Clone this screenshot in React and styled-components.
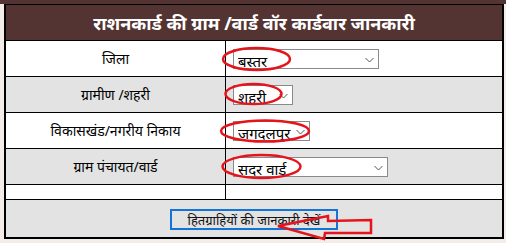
import React from 'react'
import styled, { createGlobalStyle } from 'styled-components'

const Global = createGlobalStyle`
  html, body {
    margin: 0;
    padding: 0;
  }
  body {
    background: #f4ece9;
    font-family: "Noto Sans", "Liberation Sans", sans-serif;
    width: 506px;
    height: 243px;
    overflow: hidden;
  }
`

const rows = [
  { label: 'जिला', value: 'बस्तर', width: 146, shade: false },
  { label: 'ग्रामीण /शहरी', value: 'शहरी', width: 60, shade: true },
  { label: 'विकासखंड/नगरीय निकाय', value: 'जगदलपुर', width: 77, shade: false },
  { label: 'ग्राम पंचायत/वार्ड', value: 'सदर वार्ड', width: 155, shade: true },
]

const App = () => {
  return (
    <Page>
      <Global />
      <TopBar />
      <Wrap>
        <Table>
          <tbody>
            <tr>
              <Head colSpan={2}>राशनकार्ड की ग्राम /वार्ड वॉर कार्डवार जानकारी</Head>
            </tr>
            {rows.map((r) => (
              <Row key={r.label} $shade={r.shade}>
                <Label>{r.label}</Label>
                <Field>
                  <SelectBox style={{ width: r.width }}>
                    <Select defaultValue={r.value}>
                      <option>{r.value}</option>
                    </Select>
                    <Chevron width="9" height="6" viewBox="0 0 9 6">
                      <path d="M0.5 1 L4.5 5 L8.5 1" fill="none" stroke="#555" strokeWidth="1" />
                    </Chevron>
                  </SelectBox>
                </Field>
              </Row>
            ))}
            <Spacer>
              <td></td>
              <td></td>
            </Spacer>
            <Row $shade>
              <ButtonCell colSpan={2}>
                <Button>हितग्राहियों की जानकारी देखें</Button>
              </ButtonCell>
            </Row>
          </tbody>
        </Table>
      </Wrap>
      <Marks width="506" height="243" viewBox="0 0 506 243">
        <ellipse cx="256.5" cy="59" rx="33.5" ry="11" />
        <ellipse cx="253.5" cy="94" rx="28" ry="10" />
        <ellipse cx="265" cy="131" rx="44" ry="10.5" />
        <ellipse cx="261.5" cy="166.5" rx="39" ry="11.5" />
        <polygon points="278,226 328,216 328,221 371,220 371,233 325,233 324,239" />
      </Marks>
    </Page>
  )
}

export default App

const Page = styled.div`
  position: relative;
  width: 506px;
  height: 243px;
`

const TopBar = styled.div`
  height: 4px;
  background: #533432;
`

const Wrap = styled.div`
  padding: 0 2px 0 4px;
`

const Table = styled.table`
  width: 500px;
  border-collapse: collapse;
  border: 2px solid #000;
  border-top: 1px solid #000;
  td {
    border: 1px solid #000;
    padding: 0;
  }
`

const Head = styled.td`
  background: #533432;
  color: #fff;
  font-weight: bold;
  font-size: 18px;
  text-align: center;
  height: 35px;
`

const Row = styled.tr`
  background: ${(p) => (p.$shade ? '#e3e3e3' : '#fff')};
  height: 36px;
`

const Spacer = styled.tr`
  background: #fff;
  height: 15px;
`

const Label = styled.td`
  width: 219px;
  text-align: center;
  font-size: 14px;
  color: #000;
`

const Field = styled.td`
  padding-left: 7px !important;
`

const SelectBox = styled.div`
  position: relative;
  height: 20px;
  box-sizing: border-box;
  border: 1px solid #8a8a8a;
  background: #fff;
`

const Select = styled.select`
  appearance: none;
  box-sizing: border-box;
  border: none;
  outline: none;
  background: transparent;
  width: 100%;
  height: 18px;
  padding: 0 14px 0 4px;
  font-family: "Noto Sans", "Liberation Sans", sans-serif;
  font-size: 15px;
  line-height: 18px;
  color: #000;
`

const Chevron = styled.svg`
  position: absolute;
  z-index: 1;
  right: 4px;
  top: 7px;
  pointer-events: none;
`

const ButtonCell = styled.td`
  text-align: center;
  height: 37px;
`

const Button = styled.button`
  height: 21px;
  width: 168px;
  border: 2px solid #1274d6;
  background: transparent;
  font-family: "Noto Sans", "Liberation Sans", sans-serif;
  font-size: 13px;
  color: #111;
  padding: 0;
  margin-top: 1px;
`

const Marks = styled.svg`
  position: absolute;
  z-index: 2;
  left: 0;
  top: 0;
  pointer-events: none;
  ellipse, polygon {
    fill: none;
    stroke: #e5131b;
    stroke-width: 2.5;
  }
`
